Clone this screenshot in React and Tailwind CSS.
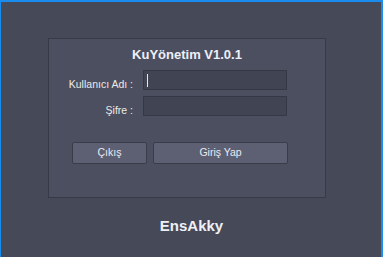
import React from 'react';

const font = { fontFamily: '"Liberation Sans", Arial, sans-serif' };

export default function App() {
  return (
    <div
      className="relative w-[383px] h-[257px] bg-[#464957] border-t-2 border-l border-r-2 border-[#1a8cf0] flex flex-col overflow-hidden"
      style={font}
    >
      {/* login panel */}
      <div className="ml-[47px] mt-[36px] w-[278px] h-[160px] bg-[#4c4f60] border border-[#373a47] flex flex-col">
        <div className="pt-[8px] text-center text-[13px] leading-[16px] font-bold text-[#eef0f8]">
          KuYönetim V1.0.1
        </div>

        <div className="mt-[7px] flex flex-col gap-[6px]">
          <div className="flex items-start">
            <div className="w-[84px] pt-[8px] text-right text-[10.5px] leading-[12px] text-[#ecebe4]">Kullanıcı Adı :</div>
            <div className="ml-[10px] w-[144px] h-[20px] bg-[#414453] border border-[#353845] flex items-center pl-[3px]">
              <div className="w-px h-[13px] bg-[#e8e8e8]" />
            </div>
          </div>
          <div className="flex items-start">
            <div className="w-[84px] pt-[8px] text-right text-[10.5px] leading-[12px] text-[#ecebe4]">Şifre :</div>
            <div className="ml-[10px] w-[144px] h-[20px] bg-[#414453] border border-[#353845]" />
          </div>
        </div>

        <div className="mt-[26px] ml-[23px] flex gap-[6px]">
          <button className="w-[75px] h-[22px] rounded-[2px] bg-[#5d6072] border border-[#393c49] text-[10.5px] text-[#e8eaf2]">
            Çıkış
          </button>
          <button className="w-[135px] h-[22px] rounded-[2px] bg-[#5d6072] border border-[#393c49] text-[10.5px] text-[#e8eaf2]">
            Giriş Yap
          </button>
        </div>
      </div>

      <div className="mt-[19px] pl-[1px] text-center text-[15px] leading-[18px] font-bold text-[#eef0f8]">EnsAkky</div>

      {/* taskbar glimpse on the right edge */}
      <div className="absolute right-[-2px] top-[178px] w-[2px] flex flex-col">
        <div className="h-[3px] bg-[#9a9aa0]" />
        <div className="h-[12px] bg-[#e0102a]" />
        <div className="h-[4px] bg-[#f4f4f4]" />
        <div className="h-[9px] bg-[#1a8cf0]" />
        <div className="h-[9px] bg-[#a8f0c8]" />
        <div className="h-[9px] bg-[#1a8cf0]" />
        <div className="h-[4px] bg-[#d8f0b0]" />
      </div>
    </div>
  );
}
